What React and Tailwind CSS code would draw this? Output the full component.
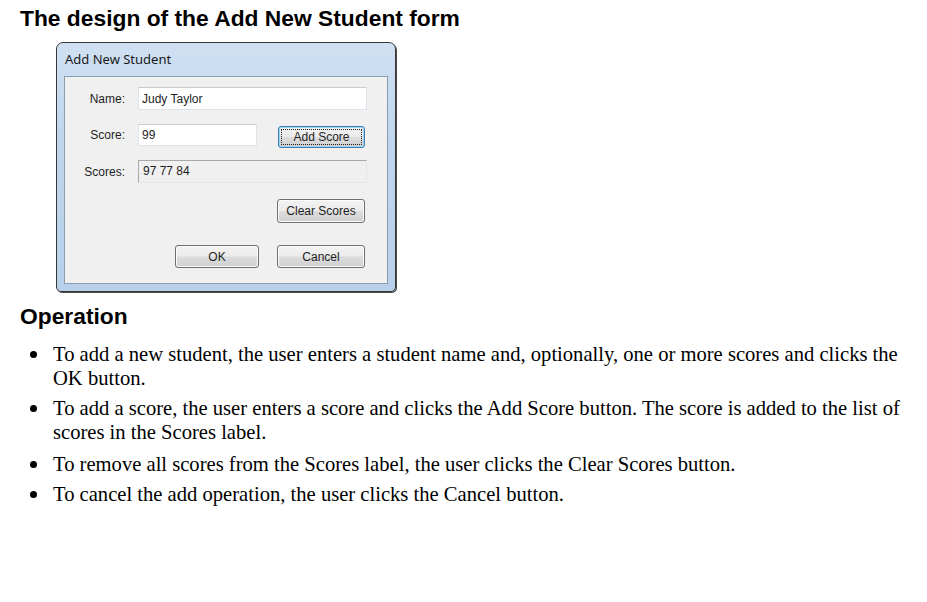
import React from 'react';

const ui = { fontFamily: '"Liberation Sans", Arial, sans-serif' };
const serif = { fontFamily: '"Liberation Serif", "Times New Roman", serif' };

function WinButton({ children, focused, className = '' }) {
  return (
    <div
      className={`relative flex items-center justify-center rounded-[3px] border text-[12px] text-[#1e1e1e] bg-[linear-gradient(to_bottom,#f3f3f3_0%,#ebebeb_48%,#dddddd_52%,#cfcfcf_100%)] ${
        focused
          ? 'border-[#3c7fb1] shadow-[inset_0_0_0_1px_#9fd3f2]'
          : 'border-[#707070] shadow-[inset_0_0_0_1px_#fbfbfb]'
      } ${className}`}
    >
      {focused && (
        <div className="absolute inset-[2px] border border-dotted border-[#222]" />
      )}
      <span className="relative">{children}</span>
    </div>
  );
}

function Label({ children }) {
  return <div className="w-[60px] text-right text-[12px] text-[#1e1e1e]">{children}</div>;
}

function AddStudentDialog() {
  return (
    <div className="ml-[36px] mt-[11px] w-[340px] h-[250px] rounded-t-[7px] rounded-b-[5px] border border-[#383838] shadow-[1px_1px_0_#4a4a4a] bg-[linear-gradient(to_bottom,#cfe0f2_0%,#c0d6ee_40%,#b8d0ea_100%)] px-[7px] pb-[7px] flex flex-col" style={ui}>
      <div className="h-[33px] flex items-center pl-[1px] text-[13px] text-[#1a1a1a]" style={{ fontFamily: '"Noto Sans", "Open Sans", sans-serif' }}>
        Add New Student
      </div>
      <div className="flex-1 border border-[#8c9cb0] bg-[#f0f0f0] pt-[10px]">
        {/* Name */}
        <div className="flex items-center h-[23px]">
          <Label>Name:</Label>
          <div className="ml-[13px] w-[229px] h-[23px] bg-white border border-[#dde3ea] border-t-[#c6ccd4] flex items-center pl-[3px] text-[12px] text-[#1e1e1e]">
            Judy Taylor
          </div>
        </div>
        {/* Score */}
        <div className="flex items-center h-[22px] mt-[14px]">
          <Label>Score:</Label>
          <div className="ml-[13px] w-[119px] h-[22px] bg-white border border-[#dde3ea] border-t-[#c6ccd4] flex items-center pl-[3px] text-[12px] text-[#1e1e1e]">
            99
          </div>
          <WinButton focused className="ml-[21px] mt-[3px] w-[87px] h-[22px]">
            Add Score
          </WinButton>
        </div>
        {/* Scores */}
        <div className="flex items-center h-[23px] mt-[14px]">
          <Label>Scores:</Label>
          <div className="ml-[13px] w-[229px] h-[23px] border border-[#e6e6e6] border-t-[#a9a9a9] border-l-[#a9a9a9] flex items-start pl-[4px] pt-[1px] text-[12px] text-[#1e1e1e]">
            97 77 84
          </div>
        </div>
        <div className="flex justify-end pr-[22px] mt-[16px]">
          <WinButton className="w-[88px] h-[24px]">Clear Scores</WinButton>
        </div>
        <div className="flex justify-end pr-[22px] mt-[22px] gap-[18px]">
          <WinButton className="w-[84px] h-[23px]">OK</WinButton>
          <WinButton className="w-[88px] h-[23px]">Cancel</WinButton>
        </div>
      </div>
    </div>
  );
}

const bullets = [
  'To add a new student, the user enters a student name and, optionally, one or more scores and clicks the OK button.',
  'To add a score, the user enters a score and clicks the Add Score button. The score is added to the list of scores in the Scores label.',
  'To remove all scores from the Scores label, the user clicks the Clear Scores button.',
  'To cancel the add operation, the user clicks the Cancel button.',
];
const gaps = ['mt-[13px]', 'mt-[6px]', 'mt-[8px]', 'mt-[6px]'];

export default function App() {
  return (
    <div className="w-[927px] h-[602px] bg-white pt-[5px] pl-[20px] overflow-hidden">
      <h1 className="text-[22.8px] leading-[26px] font-bold text-black" style={ui}>
        The design of the Add New Student form
      </h1>

      <AddStudentDialog />

      <h2 className="mt-[11px] text-[22.8px] leading-[26px] font-bold text-black" style={ui}>
        Operation
      </h2>

      <ul style={serif}>
        {bullets.map((b, i) => (
          <li key={i} className={`flex ${gaps[i]} text-[20.6px] leading-[24px] text-black`}>
            <span className="w-[33px] shrink-0 h-[24px] flex items-center pl-[10px]">
              <span className="w-[7px] h-[7px] rounded-full bg-black" />
            </span>
            <span className="w-[855px]">{b}</span>
          </li>
        ))}
      </ul>
    </div>
  );
}
